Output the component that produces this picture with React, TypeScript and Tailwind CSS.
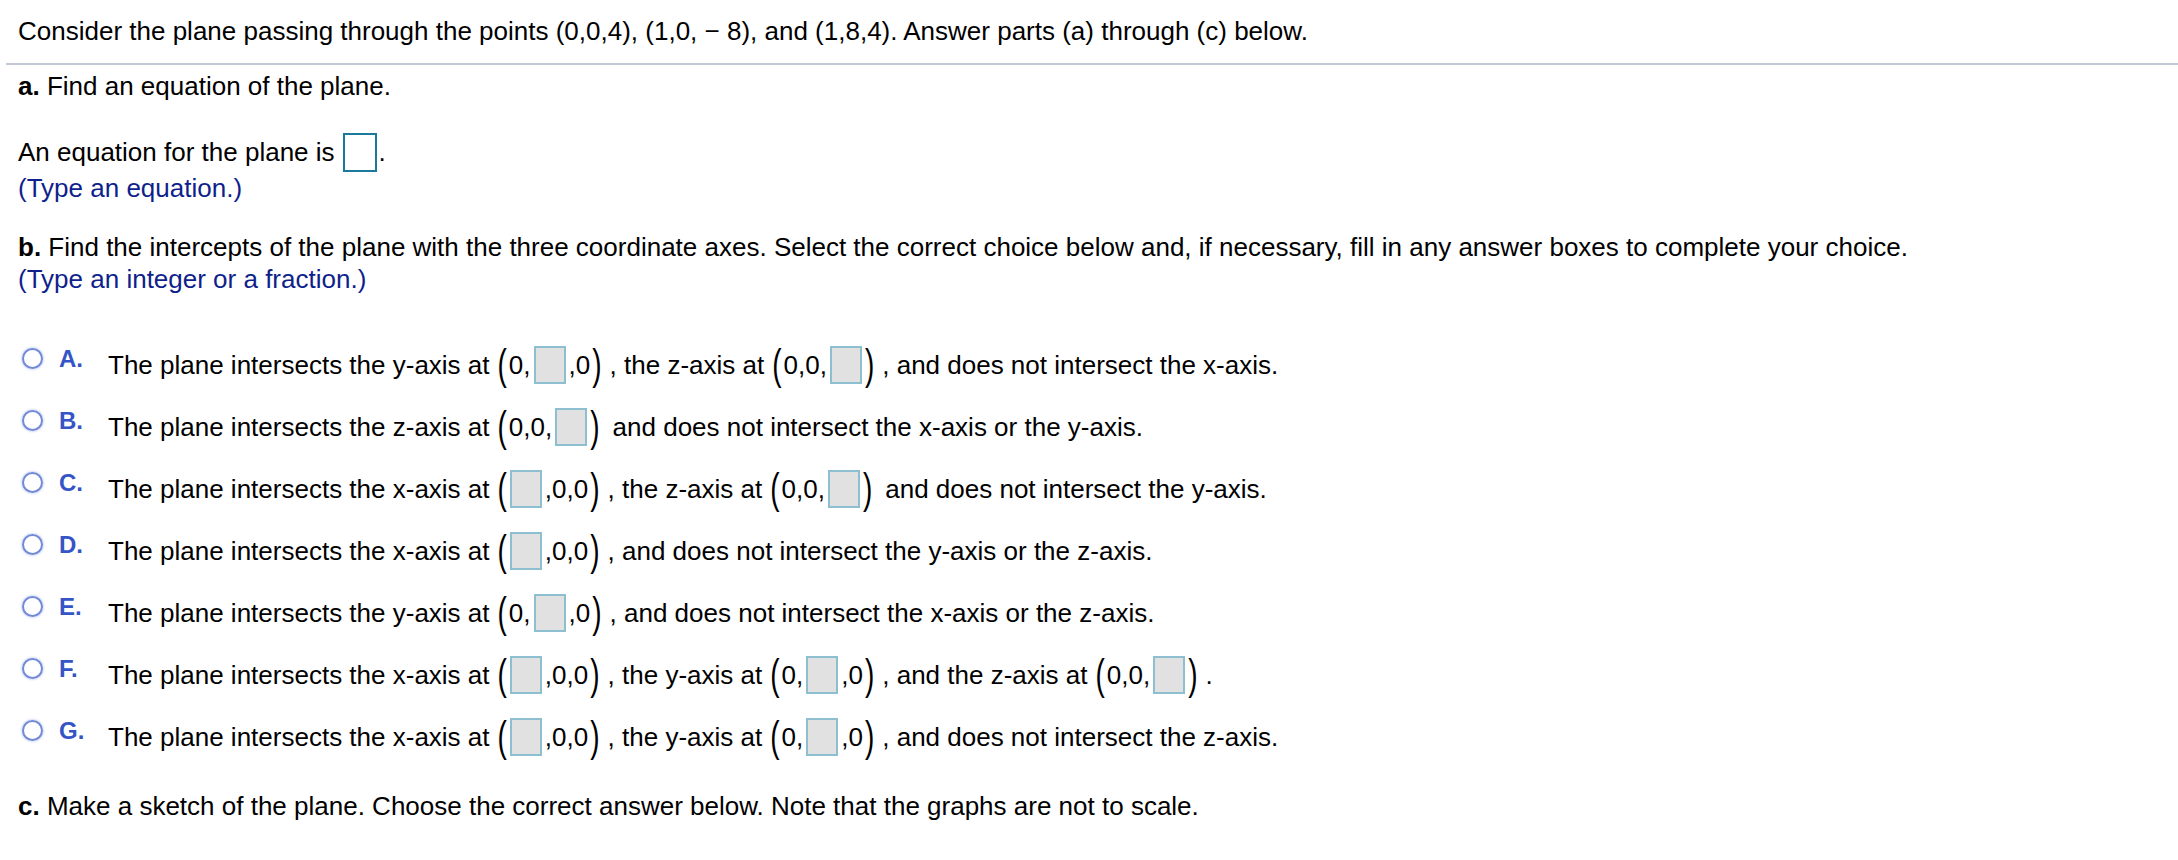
import React from 'react';

const font = { fontFamily: '"Liberation Sans", Arial, sans-serif' };

// 浅灰答题框（选项里的空格）
const Box = () => (
  <span className="inline-block mx-[2px] w-[32px] h-[38px] bg-[#e1e1e1] border-2 border-[#8dbfd0] align-middle" />
);

// 细长括号
const Paren = ({ c }: { c: string }) => (
  <span className="inline-block text-[28px] leading-[28px] scale-y-[1.5] px-[1px]">{c}</span>
);

type Part = string | 'BOX' | 'LP' | 'RP';

const Tuple = ({ parts }: { parts: Part[] }) => (
  <span className="inline-flex items-center mx-[7px]">
    {parts.map((p, i) =>
      p === 'BOX' ? (
        <Box key={i} />
      ) : p === 'LP' ? (
        <Paren key={i} c="(" />
      ) : p === 'RP' ? (
        <Paren key={i} c=")" />
      ) : (
        <span key={i} className="px-[1px]">{p}</span>
      )
    )}
  </span>
);

const Y: Part[] = ['LP', '0,', 'BOX', ',0', 'RP'];
const X: Part[] = ['LP', 'BOX', ',0,0', 'RP'];
const Z: Part[] = ['LP', '0,0,', 'BOX', 'RP'];

interface Option {
  letter: string;
  content: React.ReactNode;
}

const options: Option[] = [
  {
    letter: 'A.',
    content: (
      <>
        <span>The plane intersects the y-axis at</span>
        <Tuple parts={Y} />
        <span>, the z-axis at</span>
        <Tuple parts={Z} />
        <span>, and does not intersect the x-axis.</span>
      </>
    ),
  },
  {
    letter: 'B.',
    content: (
      <>
        <span>The plane intersects the z-axis at</span>
        <Tuple parts={Z} />
        <span className="pl-[5px]">and does not intersect the x-axis or the y-axis.</span>
      </>
    ),
  },
  {
    letter: 'C.',
    content: (
      <>
        <span>The plane intersects the x-axis at</span>
        <Tuple parts={X} />
        <span>, the z-axis at</span>
        <Tuple parts={Z} />
        <span className="pl-[5px]">and does not intersect the y-axis.</span>
      </>
    ),
  },
  {
    letter: 'D.',
    content: (
      <>
        <span>The plane intersects the x-axis at</span>
        <Tuple parts={X} />
        <span>, and does not intersect the y-axis or the z-axis.</span>
      </>
    ),
  },
  {
    letter: 'E.',
    content: (
      <>
        <span>The plane intersects the y-axis at</span>
        <Tuple parts={Y} />
        <span>, and does not intersect the x-axis or the z-axis.</span>
      </>
    ),
  },
  {
    letter: 'F.',
    content: (
      <>
        <span>The plane intersects the x-axis at</span>
        <Tuple parts={X} />
        <span>, the y-axis at</span>
        <Tuple parts={Y} />
        <span>, and the z-axis at</span>
        <Tuple parts={Z} />
        <span>.</span>
      </>
    ),
  },
  {
    letter: 'G.',
    content: (
      <>
        <span>The plane intersects the x-axis at</span>
        <Tuple parts={X} />
        <span>, the y-axis at</span>
        <Tuple parts={Y} />
        <span>, and does not intersect the z-axis.</span>
      </>
    ),
  },
];

export default function App() {
  return (
    <div className="w-[2178px] h-[860px] bg-white text-black text-[26px] overflow-hidden" style={font}>
      {/* 题干 */}
      <div className="pt-[16px] pl-[18px] leading-[30px]">
        Consider the plane passing through the points (0,0,4), (1,0, − 8), and (1,8,4). Answer parts (a) through (c) below.
      </div>
      <div className="mt-[17px] ml-[6px] h-[2px] bg-[#c4c9d7]" />

      <div className="pl-[18px]">
        {/* a */}
        <div className="mt-[6px] leading-[30px]">
          <span className="font-bold">a.</span> Find an equation of the plane.
        </div>
        <div className="mt-[32px] h-[39px] flex items-center">
          <span>An equation for the plane is</span>
          <span className="ml-[8px] w-[34px] h-[39px] border-2 border-[#1b7a9b] bg-white" />
          <span className="ml-[2px]">.</span>
        </div>
        <div className="mt-[1px] leading-[30px] text-[#0f1f8c]">(Type an equation.)</div>

        {/* b */}
        <div className="mt-[29px] leading-[30px]">
          <span className="font-bold">b.</span> Find the intercepts of the plane with the three coordinate axes. Select the correct
          choice below and, if necessary, fill in any answer boxes to complete your choice.
        </div>
        <div className="mt-[2px] leading-[30px] text-[#0f1f8c]">(Type an integer or a fraction.)</div>
      </div>

      {/* 选项 */}
      <div className="mt-[40px] pl-[22px]">
        {options.map((o) => (
          <div key={o.letter} className="h-[62px] flex items-center whitespace-nowrap">
            <span className="mb-[14px] w-[21px] h-[21px] rounded-full border-2 border-[#7189d6] shadow-[0_0_3px_#9fb1ea]" />
            <span className="mb-[12px] ml-[16px] w-[49px] text-[24px] font-bold text-[#3554c6]">{o.letter}</span>
            <span className="flex items-center">{o.content}</span>
          </div>
        ))}
      </div>

      {/* c */}
      <div className="mt-[23px] pl-[18px] leading-[30px]">
        <span className="font-bold">c.</span> Make a sketch of the plane. Choose the correct answer below. Note that the graphs are
        not to scale.
      </div>
    </div>
  );
}
